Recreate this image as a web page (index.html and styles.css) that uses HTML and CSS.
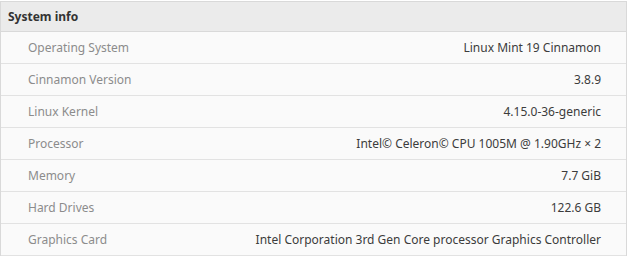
FILE: index.html
```html
<!DOCTYPE html>
<html>
<head>
<meta charset="utf-8">
<link rel="stylesheet" href="styles.css">
</head>
<body>
<div class="panel">
  <div class="panel-header">System info</div>
  <div class="rows">
    <div class="row"><span class="label">Operating System</span><span class="value">Linux Mint 19 Cinnamon</span></div>
    <div class="row"><span class="label">Cinnamon Version</span><span class="value">3.8.9</span></div>
    <div class="row"><span class="label">Linux Kernel</span><span class="value">4.15.0-36-generic</span></div>
    <div class="row"><span class="label">Processor</span><span class="value">Intel© Celeron© CPU 1005M @ 1.90GHz × 2</span></div>
    <div class="row"><span class="label">Memory</span><span class="value">7.7 GiB</span></div>
    <div class="row"><span class="label">Hard Drives</span><span class="value">122.6 GB</span></div>
    <div class="row"><span class="label">Graphics Card</span><span class="value">Intel Corporation 3rd Gen Core processor Graphics Controller</span></div>
  </div>
</div>
</body>
</html>
```
FILE: styles.css
```css
html, body {
  margin: 0;
  padding: 0;
  background: #ffffff;
}
body {
  font-family: "Noto Sans", "DejaVu Sans", sans-serif;
  font-size: 12px;
}
.panel {
  margin-top: 1px;
  width: 625px;
  border: 1px solid #d9d9d9;
  border-bottom: none;
  background: #fafafa;
}
.panel-header {
  height: 29px;
  line-height: 29px;
  padding-left: 7px;
  background: #ebebeb;
  border-bottom: 1px solid #d9d9d9;
  font-weight: bold;
  color: #333333;
}
.row {
  display: flex;
  justify-content: space-between;
  align-items: center;
  height: 31px;
  border-bottom: 1px solid #e2e2e2;
  padding: 0 25px 0 27px;
}
.label {
  color: #8c8c8c;
}
.value {
  color: #3c3c3c;
}
```
